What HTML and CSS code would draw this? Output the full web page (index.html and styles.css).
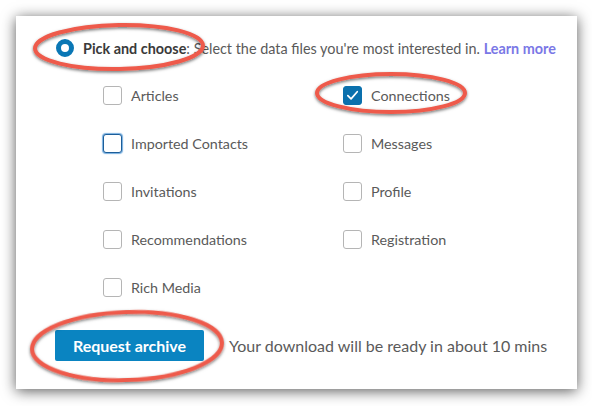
FILE: index.html
```html
<!DOCTYPE html>
<html>
<head>
<meta charset="utf-8">
<link rel="stylesheet" href="styles.css">
</head>
<body>
<div class="card">
  <div class="choice">
    <span class="radio"></span>
    <p class="choice-text"><strong>Pick and choose</strong>: Select the data files you're most interested in. <a class="link" href="#">Learn more</a></p>
  </div>
  <ul class="files">
    <li class="file"><span class="box"></span>Articles</li>
    <li class="file"><span class="box checked"><svg viewBox="0 0 20 20" width="20" height="20"><path d="M4.5 10.2 L8.3 14 L15.6 5.6" fill="none" stroke="#fff" stroke-width="2" stroke-linecap="round" stroke-linejoin="round"/></svg></span>Connections</li>
    <li class="file"><span class="box focus"></span>Imported Contacts</li>
    <li class="file"><span class="box"></span>Messages</li>
    <li class="file"><span class="box"></span>Invitations</li>
    <li class="file"><span class="box"></span>Profile</li>
    <li class="file"><span class="box"></span>Recommendations</li>
    <li class="file"><span class="box"></span>Registration</li>
    <li class="file"><span class="box"></span>Rich Media</li>
  </ul>
  <div class="actions">
    <button class="btn">Request archive</button>
    <span class="note">Your download will be ready in about 10 mins</span>
  </div>
</div>
<svg class="marks" width="592" height="406" viewBox="0 0 592 406">
  <defs>
    <filter id="sh" x="-20%" y="-40%" width="140%" height="180%">
      <feDropShadow dx="0" dy="1.5" stdDeviation="1.5" flood-color="#000" flood-opacity="0.55"/>
    </filter>
  </defs>
  <g fill="none" stroke="#ee5a4b" stroke-width="4" filter="url(#sh)">
    <ellipse cx="119" cy="47" rx="84" ry="22" transform="rotate(-1 119 47)"/>
    <ellipse cx="391" cy="93" rx="74" ry="19"/>
    <ellipse cx="127" cy="346" rx="95" ry="34" transform="rotate(-2 127 346)"/>
  </g>
</svg>
</body>
</html>
```
FILE: styles.css
```css
html, body {
  margin: 0;
  padding: 0;
  background: #fff;
}
body {
  width: 592px;
  height: 406px;
  position: relative;
  overflow: hidden;
  font-family: Lato, "Liberation Sans", sans-serif;
  color: #5a5a5a;
}
.card {
  margin: 16px 0 0 16px;
  width: 561px;
  height: 373px;
  box-sizing: border-box;
  background: #fff;
  box-shadow: 0 2px 13px rgba(0, 0, 0, 0.65);
  padding: 16px 0 0 39px;
}
.choice {
  display: flex;
  align-items: center;
  height: 32px;
}
.radio {
  width: 18px;
  height: 18px;
  box-sizing: border-box;
  border-radius: 50%;
  border: 5px solid #0a77b5;
  background: #fff;
  margin-left: 1px;
  flex: none;
}
.choice-text {
  margin: 0 0 0 9px;
  font-size: 14.4px;
  color: #5a5a5a;
  white-space: nowrap;
}
.choice-text strong {
  color: #3a3a3a;
  font-weight: 700;
}
.link {
  color: #7a78e6;
  font-weight: 700;
  text-decoration: none;
}
.files {
  list-style: none;
  margin: 7px 0 0 48px;
  padding: 0;
  display: grid;
  grid-template-columns: 240px 240px;
  grid-auto-rows: 48px;
}
.file {
  display: flex;
  align-items: center;
  gap: 9px;
  font-size: 14.3px;
  color: #5a5a5a;
}
.box {
  width: 19px;
  height: 19px;
  box-sizing: border-box;
  border: 1px solid #b5b5b5;
  border-radius: 3px;
  background: #fff;
  flex: none;
  display: flex;
  align-items: center;
  justify-content: center;
}
.box.checked {
  background: #0a70ad;
  border-color: #0a70ad;
}
.box.checked svg {
  width: 17px;
  height: 17px;
}
.box.focus {
  border: 1.5px solid #1d5e99;
  box-shadow: 0 0 1px 1px rgba(60, 140, 210, 0.7);
}
.actions {
  display: flex;
  align-items: center;
  margin-top: 19px;
  gap: 25px;
}
.btn {
  width: 149px;
  height: 31px;
  border: none;
  border-radius: 2px;
  background: #0a84c1;
  color: #fff;
  font-family: Lato, "Liberation Sans", sans-serif;
  font-size: 16px;
  font-weight: 700;
  padding: 0;
}
.note {
  font-size: 16px;
  color: #5a5a5a;
  white-space: nowrap;
}
.marks {
  position: absolute;
  left: 0;
  top: 0;
  pointer-events: none;
}
```
